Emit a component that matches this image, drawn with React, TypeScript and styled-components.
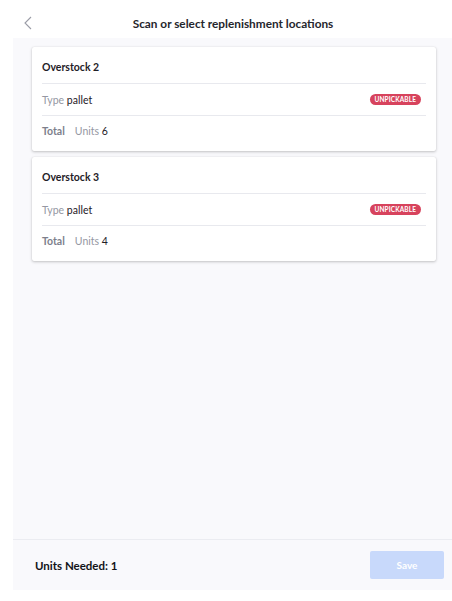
import React from "react";
import styled, { createGlobalStyle } from "styled-components";

// Types -------------------------------------------------------------------------

interface Location {
  name: string;
  type: string;
  units: number;
}

const locations: Location[] = [
  { name: "Overstock 2", type: "pallet", units: 6 },
  { name: "Overstock 3", type: "pallet", units: 4 },
];

// Component ---------------------------------------------------------------------

const App: React.FC = () => {
  return (
    <>
      <GlobalStyle />
      <Page>
        <Header>
          <BackButton aria-label="Back">
            <svg width="10" height="14" viewBox="0 0 10 14">
              <path d="M8 1 L2 7 L8 13" fill="none" stroke="#9a9ca6" strokeWidth="1.1" />
            </svg>
          </BackButton>
          <Title>Scan or select replenishment locations</Title>
        </Header>
        <Panel>
          <List>
            {locations.map((loc) => (
              <Card key={loc.name}>
                <CardTitle>{loc.name}</CardTitle>
                <Row>
                  <span>
                    <Label>Type </Label>
                    <Value>{loc.type}</Value>
                  </span>
                  <Badge>UNPICKABLE</Badge>
                </Row>
                <Row>
                  <span>
                    <Strong>Total</Strong>
                    <Label>Units </Label>
                    <Value>{loc.units}</Value>
                  </span>
                </Row>
              </Card>
            ))}
          </List>
          <Footer>
            <Needed>Units Needed: 1</Needed>
            <SaveButton disabled>Save</SaveButton>
          </Footer>
        </Panel>
      </Page>
    </>
  );
};

export default App;

// Styled ------------------------------------------------------------------------

const GlobalStyle = createGlobalStyle`
  body {
    margin: 0;
    background: #ffffff;
    font-family: Lato, "Noto Sans", sans-serif;
    color: #1f2027;
  }
`;

const Page = styled.div`
  width: 452px;
  height: 601px;
  display: flex;
  flex-direction: column;
`;

const Header = styled.div`
  position: relative;
  height: 38px;
  display: flex;
  align-items: center;
  justify-content: center;
  padding-top: 9px;
  box-sizing: border-box;
`;

const BackButton = styled.button`
  position: absolute;
  left: 23px;
  top: 16px;
  background: none;
  border: 0;
  padding: 0;
  display: flex;
`;

const Title = styled.h1`
  margin: 0;
  font-size: 11.8px;
  font-weight: 700;
  color: #25262c;
  margin-left: 14px;
`;

const Panel = styled.div`
  margin-left: 13px;
  height: 552px;
  background: #f9f9fc;
  display: flex;
  flex-direction: column;
`;

const List = styled.div`
  flex: 1;
  padding: 9px 16px 0 19px;
  display: flex;
  flex-direction: column;
  gap: 6px;
`;

const Card = styled.div`
  background: #ffffff;
  border-radius: 2px;
  box-shadow: 0 1px 3px rgba(0, 0, 0, 0.22), 0 0 1px rgba(0, 0, 0, 0.12);
  padding: 0 10px;
`;

const CardTitle = styled.div`
  height: 37px;
  display: flex;
  align-items: center;
  font-size: 10.5px;
  font-weight: 700;
  color: #1f2027;
  border-bottom: 1px solid #e8e9ee;
  padding-top: 4px;
  box-sizing: border-box;
`;

const Row = styled.div`
  height: 31px;
  display: flex;
  align-items: center;
  justify-content: space-between;
  font-size: 10.5px;
  border-bottom: 1px solid #e8e9ee;

  &:last-child {
    height: 35px;
    padding-bottom: 6px;
    box-sizing: border-box;
    border-bottom: 0;
  }
`;

const Label = styled.span`
  color: #9597a3;
`;

const Value = styled.span`
  color: #1f2027;
`;

const Strong = styled.span`
  color: #7d7f8c;
  font-weight: 700;
  margin-right: 10px;
`;

const Badge = styled.span`
  background: #d7435d;
  color: #ffffff;
  border-radius: 6px;
  font-size: 6.5px;
  font-weight: 700;
  padding: 2px 5px;
  letter-spacing: 0.1px;
  margin-right: 5px;
`;

const Footer = styled.div`
  height: 50px;
  border-top: 1px solid #ebecf1;
  display: flex;
  align-items: center;
  justify-content: space-between;
  padding: 0 8px 0 22px;
`;

const Needed = styled.div`
  font-size: 11.5px;
  font-weight: 700;
  color: #121318;
`;

const SaveButton = styled.button`
  width: 74px;
  height: 28px;
  border: 0;
  border-radius: 2px;
  background: #c8d9fb;
  color: #ffffff;
  font-family: inherit;
  font-size: 10px;
  font-weight: 700;
`;
